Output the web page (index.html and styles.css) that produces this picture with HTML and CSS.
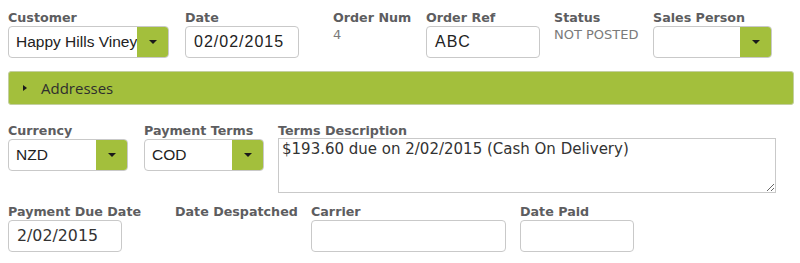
FILE: index.html
```html
<!DOCTYPE html>
<html>
<head>
<meta charset="utf-8">
<link rel="stylesheet" href="styles.css">
</head>
<body>
<div class="form">
  <div class="row">
    <div class="field w-customer">
      <div class="label">Customer</div>
      <div class="select s-customer"><span class="sel-text">Happy Hills Vineyards</span><span class="btn"><span class="caret"></span></span></div>
    </div>
    <div class="field w-date">
      <div class="label">Date</div>
      <div class="input i-date">02/02/2015</div>
    </div>
    <div class="field w-onum">
      <div class="label">Order Num</div>
      <div class="value">4</div>
    </div>
    <div class="field w-oref">
      <div class="label">Order Ref</div>
      <div class="input i-date">ABC</div>
    </div>
    <div class="field w-status">
      <div class="label">Status</div>
      <div class="value">NOT POSTED</div>
    </div>
    <div class="field">
      <div class="label">Sales Person</div>
      <div class="select s-sales"><span class="sel-text"></span><span class="btn"><span class="caret"></span></span></div>
    </div>
  </div>

  <div class="bar"><span class="tri"></span><span class="bar-text">Addresses</span></div>

  <div class="row row2">
    <div class="field w-cur">
      <div class="label">Currency</div>
      <div class="select s-cur"><span class="sel-text">NZD</span><span class="btn"><span class="caret"></span></span></div>
    </div>
    <div class="field w-terms">
      <div class="label">Payment Terms</div>
      <div class="select s-cur"><span class="sel-text">COD</span><span class="btn"><span class="caret"></span></span></div>
    </div>
    <div class="field">
      <div class="label">Terms Description</div>
      <textarea class="ta">$193.60 due on 2/02/2015 (Cash On Delivery)</textarea>
    </div>
  </div>

  <div class="row row3">
    <div class="field w-due">
      <div class="label">Payment Due Date</div>
      <div class="input i-due">2/02/2015</div>
    </div>
    <div class="field w-desp">
      <div class="label">Date Despatched</div>
    </div>
    <div class="field w-carrier">
      <div class="label">Carrier</div>
      <div class="input i-carrier"></div>
    </div>
    <div class="field">
      <div class="label">Date Paid</div>
      <div class="input i-date"></div>
    </div>
  </div>
</div>
</body>
</html>
```
FILE: styles.css
```css
html, body {
  margin: 0;
  padding: 0;
  background: #ffffff;
}
.form {
  padding: 10px 8px 0 8px;
  font-family: "DejaVu Sans", Verdana, sans-serif;
}
.row {
  display: flex;
  align-items: flex-start;
}
.row2 {
  margin-top: 18px;
}
.row3 {
  margin-top: 11px;
}
.field {
  display: flex;
  flex-direction: column;
}
.label {
  font-size: 12.7px;
  font-weight: bold;
  color: #5d5d60;
  line-height: 16px;
  height: 16px;
  white-space: nowrap;
}
.value {
  font-size: 13px;
  color: #7a7a7a;
  line-height: 16px;
  margin-top: 1px;
}
.w-customer { width: 177px; }
.w-date { width: 148px; }
.w-onum { width: 93px; }
.w-oref { width: 128px; }
.w-status { width: 99px; }
.w-cur { width: 136px; }
.w-terms { width: 134px; }
.w-due { width: 167px; }
.w-desp { width: 136px; }
.w-carrier { width: 209px; }

.input, .select {
  box-sizing: border-box;
  height: 32px;
  border: 1px solid #c9c9c9;
  border-radius: 4px;
  background: #fff;
  font-family: "Liberation Sans", Arial, sans-serif;
  color: #222;
  line-height: 30px;
  white-space: nowrap;
  overflow: hidden;
}
.input {
  padding-left: 8px;
  font-size: 16px;
  letter-spacing: 1px;
}
.select {
  font-size: 15.5px;
}
.i-date { width: 114px; }
.i-due {
  width: 114px;
  font-family: "DejaVu Sans", Verdana, sans-serif;
  font-size: 15.8px;
  letter-spacing: 0;
  color: #333;
}
.i-carrier { width: 195px; }

.select {
  display: flex;
  align-items: stretch;
}
.sel-text {
  flex: 1;
  padding-left: 7px;
  overflow: hidden;
  min-width: 0;
}
.btn {
  width: 32px;
  flex: none;
  background: #a3bf3c;
  display: flex;
  align-items: center;
  justify-content: center;
  margin: -1px -1px -1px 0;
  border-radius: 0 4px 4px 0;
}
.caret {
  width: 0;
  height: 0;
  border-left: 4px solid transparent;
  border-right: 4px solid transparent;
  border-top: 4px solid #1a1a1a;
}
.s-customer { width: 161px; }
.s-sales { width: 119px; }
.s-cur { width: 120px; }

.bar {
  box-sizing: border-box;
  margin-top: 13px;
  height: 34px;
  width: 786px;
  background: #a3bf3c;
  border: 1px solid #c3cfa0;
  border-radius: 3px;
  display: flex;
  align-items: center;
  padding-left: 14px;
}
.tri {
  width: 0;
  height: 0;
  border-top: 3.5px solid transparent;
  border-bottom: 3.5px solid transparent;
  border-left: 4px solid #1a1a1a;
  margin-right: 14px;
}
.bar-text {
  font-family: "Open Sans", sans-serif;
  font-size: 15px;
  color: #2e2e2e;
}

.ta {
  box-sizing: border-box;
  width: 498px;
  height: 55px;
  margin: -1px 0 0 0;
  border: 1px solid #c9c9c9;
  border-radius: 0;
  font-family: "DejaVu Sans", Verdana, sans-serif;
  font-size: 15px;
  color: #333;
  padding: 2px 3px;
  resize: both;
  line-height: 17px;
}
```
